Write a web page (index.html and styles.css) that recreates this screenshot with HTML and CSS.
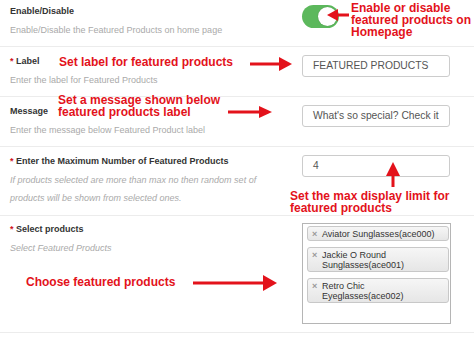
FILE: index.html
```html
<!DOCTYPE html>
<html>
<head>
<meta charset="utf-8">
<link rel="stylesheet" href="styles.css">
</head>
<body>
<div class="page">
  <div class="row row-first">
    <div class="info">
      <div class="label">Enable/Disable</div>
      <div class="desc">Enable/Disable the Featured Products on home page</div>
    </div>
    <div class="control control-switch"><span class="switch"><span class="knob"></span></span></div>
  </div>
  <div class="row">
    <div class="info">
      <div class="label"><span class="req">*</span> Label</div>
      <div class="desc">Enter the label for Featured Products</div>
    </div>
    <div class="control"><div class="input">FEATURED PRODUCTS</div></div>
  </div>
  <div class="row">
    <div class="info">
      <div class="label">Message</div>
      <div class="desc">Enter the message below Featured Product label</div>
    </div>
    <div class="control"><div class="input">What's so special? Check it</div></div>
  </div>
  <div class="row row-max">
    <div class="info">
      <div class="label"><span class="req">*</span> Enter the Maximum Number of Featured Products</div>
      <div class="desc italic">If products selected are more than max no then random set of products will be shown from selected ones.</div>
    </div>
    <div class="control"><div class="input">4</div></div>
  </div>
  <div class="row row-select">
    <div class="info">
      <div class="label"><span class="req">*</span> Select products</div>
      <div class="desc italic">Select Featured Products</div>
    </div>
    <div class="control">
      <div class="multi">
        <div class="tag"><span class="x">×</span>Aviator Sunglasses(ace000)</div>
        <div class="tag"><span class="x">×</span>Jackie O Round Sunglasses(ace001)</div>
        <div class="tag"><span class="x">×</span>Retro Chic Eyeglasses(ace002)</div>
      </div>
    </div>
  </div>

  <div class="note note-toggle">Enable or disable<br>featured products on<br>Homepage</div>
  <div class="note note-label">Set label for featured products</div>
  <div class="note note-message">Set a message shown below<br>featured products label</div>
  <div class="note note-max">Set the max display limit for<br>featured products</div>
  <div class="note note-select">Choose featured products</div>

  <svg class="arrows" width="474" height="340" viewBox="0 0 474 340">
    <g fill="#e3121b">
      <rect x="336" y="13.5" width="13" height="3"/>
      <polygon points="327,15 338,9 338,21"/>
      <rect x="250" y="62.5" width="31" height="3"/>
      <polygon points="279,57 279,71 292,64"/>
      <rect x="228" y="110.5" width="33" height="3"/>
      <polygon points="259,106 259,118 272,112"/>
      <rect x="391.5" y="174" width="3" height="13"/>
      <polygon points="393,162 386,176 400,176"/>
      <rect x="193" y="281.5" width="72" height="3"/>
      <polygon points="263,275 263,291 277,283"/>
    </g>
  </svg>
</div>
</body>
</html>
```

FILE: styles.css
```css
html, body {
  margin: 0;
  padding: 0;
  background: #fff;
}

.page {
  position: relative;
  width: 474px;
  height: 340px;
  overflow: hidden;
  font-family: "Liberation Sans", Arial, sans-serif;
}

.row {
  display: flex;
  box-sizing: border-box;
  height: 50px;
  padding: 8px 0 0 10px;
  border-bottom: 1px solid #ececec;
}

.row-first {
  height: 47px;
  padding-top: 5px;
}

.row-max {
  height: 69px;
}

.row-select {
  height: 117px;
  padding-top: 7px;
}

.info {
  flex: 0 0 292px;
}

.label {
  font-size: 9px;
  font-weight: bold;
  line-height: 12px;
  color: #333;
}

.req {
  color: #d0141c;
}

.desc {
  margin-top: 4px;
  width: 262px;
  font-size: 9px;
  line-height: 18px;
  color: #aaa;
}

.italic {
  font-style: italic;
}

.control {
  flex: 0 0 auto;
}

.switch {
  position: relative;
  display: block;
  width: 37px;
  height: 23px;
  border-radius: 12px;
  background: #5cb85c;
}

.knob {
  position: absolute;
  right: 2px;
  top: 2px;
  width: 19px;
  height: 19px;
  border-radius: 50%;
  background: #fff;
  box-shadow: 0 0 1px rgba(0, 0, 0, 0.3);
}

.input {
  box-sizing: border-box;
  width: 148px;
  height: 22px;
  padding: 0 10px;
  border: 1px solid #ccc;
  border-radius: 3px;
  font-size: 10.3px;
  line-height: 20px;
  color: #555;
  white-space: nowrap;
  overflow: hidden;
}

.multi {
  box-sizing: border-box;
  width: 149px;
  height: 101px;
  padding: 2px 1px 0 4px;
  border: 1px solid #b5b5b5;
  background: #fff;
  display: flex;
  flex-direction: column;
  gap: 6px;
}

.tag {
  position: relative;
  box-sizing: border-box;
  padding: 2px 4px 1px 14px;
  border: 1px solid #c8c8c8;
  border-radius: 3px;
  background: linear-gradient(#f6f6f6, #e6e6e6);
  font-size: 9px;
  line-height: 10px;
  color: #333;
}

.x {
  position: absolute;
  left: 4px;
  top: 2px;
  font-size: 9px;
  font-weight: bold;
  color: #999;
}

.note {
  position: absolute;
  font-size: 12px;
  font-weight: bold;
  line-height: 12px;
  color: #e3121b;
  white-space: nowrap;
}

.note-toggle { left: 351px; top: 2px; }
.note-label { left: 59px; top: 56px; }
.note-message { left: 58px; top: 94px; }
.note-max { left: 290px; top: 191px; line-height: 11.5px; }
.note-select { left: 26px; top: 276px; }

.arrows {
  position: absolute;
  left: 0;
  top: 0;
  pointer-events: none;
}
```
